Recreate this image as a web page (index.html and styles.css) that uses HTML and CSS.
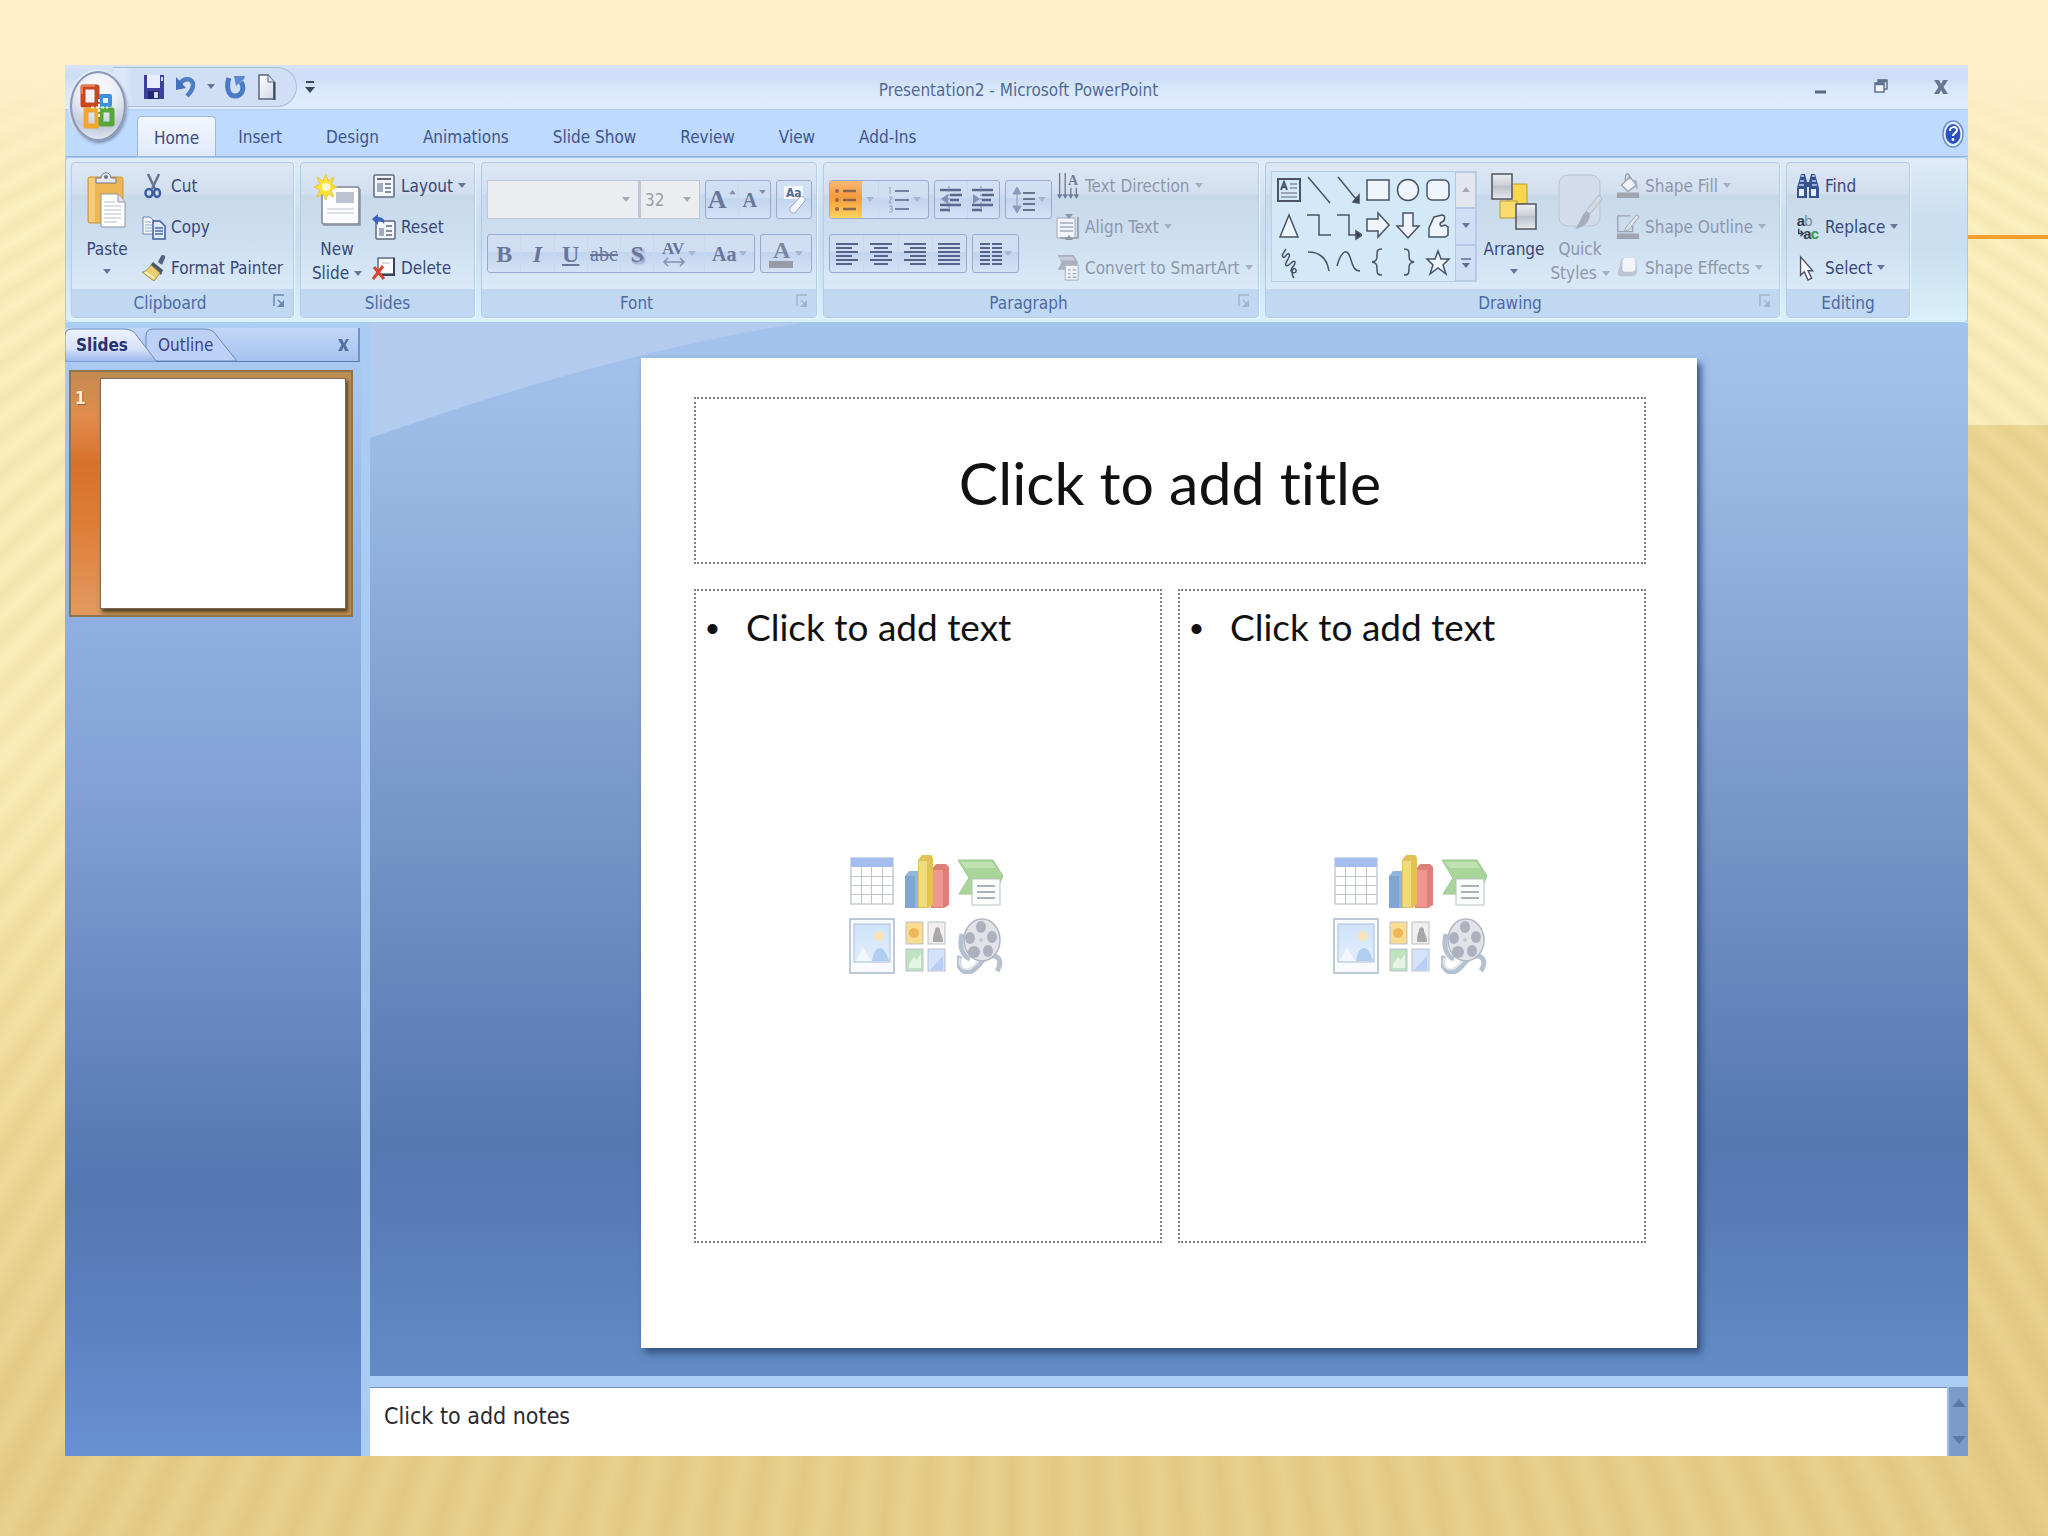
FILE: index.html
```html
<!DOCTYPE html>
<html lang="en">
<head>
<meta charset="utf-8">
<title>Presentation2 - Microsoft PowerPoint</title>
<link rel="stylesheet" href="styles.css">
</head>
<body>
<svg class="defs" aria-hidden="true">
  <defs>
    <linearGradient id="paper" x1="0" y1="0" x2="1" y2="1"><stop offset="0" stop-color="#fff"/><stop offset="1" stop-color="#cfd8e6"/></linearGradient>
    <linearGradient id="steel" x1="0" y1="0" x2="0" y2="1"><stop offset="0" stop-color="#eceef2"/><stop offset=".45" stop-color="#cdd1d8"/><stop offset=".5" stop-color="#bcc1ca"/><stop offset="1" stop-color="#e6eaee"/></linearGradient>
    <linearGradient id="sky" x1="0" y1="0" x2="0" y2="1"><stop offset="0" stop-color="#cfe3fa"/><stop offset="1" stop-color="#e3edfb"/></linearGradient>
    <linearGradient id="swoosh" x1="0" y1="0" x2="0" y2="1"><stop offset="0" stop-color="#b4cbed"/><stop offset="1" stop-color="#b2cbee"/></linearGradient>
    <symbol id="caret" viewBox="0 0 8 6"><path d="M0 0h8L4 5z" fill="currentColor"/></symbol>
    <symbol id="launcher" viewBox="0 0 12 14"><path d="M1 12V1h10" fill="none" stroke="currentColor" stroke-width="1.5"/><path d="M5 6l4 4" stroke="currentColor" stroke-width="1.5"/><path d="M11 6v7H4z" fill="currentColor"/></symbol>
    <symbol id="ph-table" viewBox="0 0 46 56"><rect x="2" y="4" width="42" height="46" fill="#fff" stroke="#a9b2c0"/><rect x="2" y="4" width="42" height="9" fill="#a3bdee"/><path d="M12.500 13v37M22.500 13v37M33.500 13v37M2 22.500h42M2 31.500h42M2 40.500h42" stroke="#c0c6c8"/></symbol>
    <symbol id="ph-chart" viewBox="0 0 46 56"><path d="M2 22l4-5h9v37H2z" fill="#94b5de"/><path d="M2 22h10v32H2z" fill="#82a6d4"/><path d="M28 16l5-6h10l3 3v38l-5 3H28z" fill="#dd8077"/><path d="M29 16h11v37H29z" fill="#f0978f"/><path d="M15 6l4-5h9l2 3v46l-4 4H15z" fill="#e0c255"/><path d="M16 7h8v46h-8z" fill="#f1dc7c"/></symbol>
    <symbol id="ph-smart" viewBox="0 0 46 56"><path d="M1 6h35l10 16-8 18H2l10-16z" fill="#a9d49a" stroke="#9bc58c"/><path d="M3 8h32l4 6H9z" fill="#bfe2b0"/><rect x="15" y="25" width="28" height="26" fill="#fbfdfb" stroke="#b9c4bd"/><path d="M20 32h18M20 38h18M20 44h18" stroke="#a7b3b8" stroke-width="2"/></symbol>
    <symbol id="ph-photo" viewBox="0 0 46 56"><rect x="1" y="1" width="44" height="54" fill="#f8fafd" stroke="#a8b9cc" stroke-width="1.500"/><rect x="5" y="6" width="36" height="38" fill="url(#sky)" stroke="#a9bede"/><circle cx="30" cy="18" r="5" fill="#fbe3b8"/><path d="M23 43c1-8 4-13 8-13s7 6 9 13z" fill="#b1cef0"/><path d="M7 43l7-14 8 14z" fill="#f2f7fd"/></symbol>
    <symbol id="ph-clips" viewBox="0 0 46 56"><g stroke="#b9c0cc"><rect x="3" y="4" width="17" height="22" fill="#f8dc92"/><rect x="25" y="4" width="17" height="22" fill="#f0efee"/><rect x="3" y="31" width="17" height="22" fill="#bfe3c0"/><rect x="25" y="31" width="17" height="22" fill="#d5e3fa"/></g><circle cx="11" cy="15" r="5" fill="#edb75a"/><path d="M30 24c0-7 1-9 2-11-1-5 6-5 5 0 1 3 3 6 3 11z" fill="#aaa7ab"/><path d="M6 46l5-7 3 3 4-6v14H6z" fill="#e6f5e3"/><path d="M27 52l13-14v14z" fill="#b7cef6"/></symbol>
    <symbol id="ph-film" viewBox="0 0 46 56"><path d="M3 38c-4 8 1 17 9 16 9-1 12-14 20-16 10-2 14 6 8 15M5 16c-3 12 0 22 8 25" fill="none" stroke="#b4c1d0" stroke-width="5"/><path d="M3 40c-2 7 2 12 8 11 8-2 12-13 20-15" fill="none" stroke="#e1e7ef" stroke-width="2"/><ellipse cx="25" cy="22" rx="18" ry="21" fill="#e2e3e9" stroke="#b3b6c1" stroke-width="1.500"/><g fill="#adb1be"><ellipse cx="24" cy="9" rx="5" ry="6"/><ellipse cx="13" cy="20" rx="5" ry="6"/><ellipse cx="35" cy="19" rx="5" ry="6"/><ellipse cx="17" cy="34" rx="6" ry="6"/><ellipse cx="31" cy="33" rx="5" ry="6"/></g><circle cx="24" cy="22" r="2" fill="#c5c7d0"/></symbol>
  </defs>
</svg>

<div class="rule"></div>

<div class="window">
  <header class="titlebar">
    <div class="qat">
      <button class="plain" aria-label="Save"><svg width="22" height="26" viewBox="0 0 22 26"><path d="M1 1h20v24H1z" fill="#3d3f9c"/><path d="M4 1h13v13H4z" fill="#e9eefc"/><path d="M18 3h2v4h-2z" fill="#d7dcf3"/><path d="M5 17h11v8H5z" fill="#25276b"/><path d="M11 18h4v6h-4z" fill="#d6daee"/></svg></button>
      <button class="plain" aria-label="Undo"><svg width="22" height="26" viewBox="0 0 22 26"><path d="M5 10c3-6 13-7 13 1 0 5-3 8-6 11" fill="none" stroke="#4f7cc4" stroke-width="4.500"/><path d="M1 3v13l10-2z" fill="#4470bb"/></svg></button>
      <button class="plain" aria-label="Undo options"><svg class="caret"><use href="#caret"/></svg></button>
      <button class="plain" aria-label="Redo"><svg width="22" height="26" viewBox="0 0 22 26"><path d="M4 4c-3 9-1 18 6 18s10-8 6-14" fill="none" stroke="#4b7ac6" stroke-width="5"/><path d="M9 2h11l-1 3-8 7z" fill="#5c89d2"/></svg></button>
      <button class="plain" aria-label="New"><svg width="20" height="28" viewBox="0 0 20 28"><path d="M2 2h9l6 7v17H2z" fill="url(#paper)" stroke="#59647e" stroke-width="1.500"/><path d="M11 2v7h6" fill="#dfe5f2" stroke="#59647e"/><path d="M17.500 9v18" stroke="#39445f" stroke-width="2"/></svg></button>
    </div>
    <button class="plain more" aria-label="Customize toolbar"><svg width="10" height="14" viewBox="0 0 10 14"><path d="M1 2h8" stroke="#3d4657" stroke-width="2"/><path d="M0 7h10l-5 6z" fill="#3d4657"/></svg></button>
    <div class="caption">Presentation2 - Microsoft PowerPoint</div>
    <div class="controls">
      <button class="plain" aria-label="Minimize"><svg width="14" height="18" viewBox="0 0 14 18"><path d="M1 14h11" stroke="#5b6880" stroke-width="3"/></svg></button>
      <button class="plain" aria-label="Restore"><svg width="14" height="18" viewBox="0 0 14 18"><path d="M4 5V2h9v9h-3" fill="none" stroke="#61718c" stroke-width="1.500"/><rect x="1" y="5" width="9" height="9" fill="#f3f7fd" stroke="#61718c" stroke-width="1.500"/><path d="M1 6h9M4 3h9" stroke="#61718c" stroke-width="2.500"/></svg></button>
      <button class="plain" aria-label="Close"><svg width="14" height="18" viewBox="0 0 14 18"><path d="M0 2h5l2 4 2-4h5L9.500 9l4.500 7H9l-2-4-2 4H0l4.500-7z" fill="#68768f"/></svg></button>
    </div>
  </header>

  <button class="office" aria-label="Office Button">
    <svg width="38" height="48" viewBox="0 0 38 48">
      <g fill="none" stroke-width="5" stroke-linejoin="round">
        <rect x="4" y="5" width="14" height="18" stroke="#c9471c"/>
        <rect x="22" y="14" width="9" height="9" stroke="#3f8fdf" stroke-width="4"/>
        <rect x="7" y="28" width="11" height="16" stroke="#f2a62c"/>
        <rect x="22" y="28" width="11" height="14" stroke="#58a63c"/>
      </g>
      <path d="M3 12V4h13" fill="none" stroke="#f08c5c" stroke-width="1.500"/>
      <path d="M12 25.500h17M20 17v19" stroke="#f6f1e4" stroke-width="2" stroke-dasharray="3 2"/>
    </svg>
  </button>

  <nav class="tabs">
    <a class="tab active" href="#home">Home</a>
    <a class="tab" href="#insert">Insert</a>
    <a class="tab" href="#design">Design</a>
    <a class="tab" href="#animations">Animations</a>
    <a class="tab" href="#slideshow">Slide Show</a>
    <a class="tab" href="#review">Review</a>
    <a class="tab" href="#view">View</a>
    <a class="tab" href="#addins">Add-Ins</a>
    <button class="plain help" aria-label="Help"><svg width="22" height="28" viewBox="0 0 22 28"><ellipse cx="11" cy="14" rx="10" ry="13" fill="#e8f0fd" stroke="#6d8fd0" stroke-width="1.500"/><ellipse cx="11" cy="14" rx="7.500" ry="10" fill="#2c53c4"/><path d="M8 11c0-5 7-5 7-1 0 3-4 3-4 6" fill="none" stroke="#fff" stroke-width="2"/><circle cx="11" cy="19.500" r="1.400" fill="#fff"/></svg></button>
  </nav>

  <section class="ribbon" id="home">
    <div class="group clipboard">
      <div class="tools">
        <button class="big"><svg width="40" height="56" viewBox="0 0 40 56"><rect x="1" y="5" width="35" height="46" rx="2" fill="#eeb653" stroke="#c99843"/><path d="M2 6h6v44H2z" fill="#f6cb7b"/><path d="M9 11V6h5c0-7 10-7 10 0h5v5z" fill="#e6e9ef" stroke="#717886"/><circle cx="19" cy="5" r="2" fill="#6b7280"/><path d="M14 22h17l7 8v25H14z" fill="#fff" stroke="#8b93a4"/><path d="M31 22v8h7" fill="#dde3ee" stroke="#8b93a4"/><path d="M17 30h11M17 34h17M17 38h17M17 42h17M17 46h17M17 50h13" stroke="#b7bec9"/></svg><span>Paste</span><svg class="caret"><use href="#caret"/></svg></button>
        <div class="rows">
          <button class="row"><svg class="icon" viewBox="0 0 24 26"><path d="M6 1l7 15M17 1l-7 15" stroke="#66748d" stroke-width="2.500"/><g fill="none" stroke="#3d5ca4" stroke-width="2.500"><ellipse cx="7" cy="20" rx="3.500" ry="4"/><ellipse cx="15" cy="20" rx="3" ry="4"/></g></svg>Cut</button>
          <button class="row"><svg class="icon" viewBox="0 0 24 26"><path d="M1 3h7l4 4v13H1z" fill="#f5f8fd" stroke="#7286b3"/><path d="M3 8h6M3 11h7M3 14h7M3 17h7" stroke="#93a6cf"/><path d="M11 7h7l5 5v13H11z" fill="#dfe9fb" stroke="#3f5c9e" stroke-width="1.500"/><path d="M13 14h8M13 17h8M13 20h8" stroke="#4b6cb4" stroke-width="1.500"/></svg>Copy</button>
          <button class="row"><svg class="icon" viewBox="0 0 24 26"><path d="M16 7l3-6c1-2 5-1 4 2l-3 7z" fill="#56627a"/><path d="M11 7l10 8-2 5-11-9z" fill="#4c566c"/><path d="M9 10l9 8-6 8L0 17c4 0 7-4 9-7z" fill="#e9cf71" stroke="#a58d45"/><path d="M3 17l9 6" stroke="#fff3bb" stroke-width="2"/></svg>Format Painter</button>
        </div>
      </div>
      <div class="label"><span>Clipboard</span><svg class="launcher"><use href="#launcher"/></svg></div>
    </div>

    <div class="group slides">
      <div class="tools">
        <button class="big two"><svg width="48" height="56" viewBox="0 0 48 56"><rect x="9" y="15" width="37" height="37" rx="2" fill="#fdfdff" stroke="#7b8598" stroke-width="1.500"/><path d="M23 20h18v11H23z" fill="#bcc4d1"/><path d="M14 37h27M14 41h27" stroke="#bbc2ce"/><path d="M10 53h37V17" fill="none" stroke="#8c93a3" stroke-width="1.500"/><path d="M13 2l2 7 6-4-3 7 6 3-6 3 3 7-6-3-2 6-3-6-6 3 3-7-6-3 6-3-3-7 6 4z" fill="#fbe338" stroke="#e9c53c"/><circle cx="13" cy="15" r="4" fill="#fffbd0"/></svg><span>New<br>Slide <svg class="caret"><use href="#caret"/></svg></span></button>
        <div class="rows">
          <button class="row"><svg class="icon" viewBox="0 0 24 26"><rect x="2" y="2" width="20" height="22" rx="1" fill="#f4f6fb" stroke="#5f6a82" stroke-width="1.500"/><path d="M5 6h14" stroke="#5f6a82" stroke-width="2"/><path d="M5 10h6v9H5z" fill="#a2acbf"/><path d="M13 11h6M13 15h6M13 19h6" stroke="#5f6a82" stroke-width="1.500"/></svg>Layout <svg class="caret"><use href="#caret"/></svg></button>
          <button class="row"><svg class="icon" viewBox="0 0 24 26"><rect x="4" y="7" width="19" height="18" rx="1" fill="#f4f6fb" stroke="#5f6a82" stroke-width="1.500"/><path d="M7 14h5v8H7z" fill="#a2acbf"/><path d="M14 12h6M14 17h6M14 21h6" stroke="#5f6a82" stroke-width="1.500"/><path d="M0 5l6-5v3c5 0 7 3 6 7-2-3-3-3-6-3v4z" fill="#3c64c0"/></svg>Reset</button>
          <button class="row"><svg class="icon" viewBox="0 0 24 26"><rect x="6" y="3" width="16" height="16" fill="#fbfcfe" stroke="#5f6a82" stroke-width="1.500"/><path d="M22 3v17H9" fill="none" stroke="#39445c" stroke-width="2"/><path d="M10 8h8" stroke="#b4bccb"/><path d="M2 12l10 12M11 11L1 24" stroke="#dd4430" stroke-width="3"/></svg>Delete</button>
        </div>
      </div>
      <div class="label"><span>Slides</span></div>
    </div>

    <div class="group font">
      <div class="tools">
        <div class="stack">
        <div class="line">
          <div class="combos">
            <label class="combo wide"><select aria-label="Font" disabled><option></option></select><svg class="caret"><use href="#caret"/></svg></label>
            <label class="combo"><select aria-label="Font size" disabled><option>32</option></select><svg class="caret"><use href="#caret"/></svg></label>
          </div>
          <div class="box w66">
            <button class="tb serif big-a" aria-label="Grow font">A<svg class="mini" viewBox="0 0 8 6"><path d="M0 5h8L4 0z" fill="currentColor"/></svg></button>
            <button class="tb serif heavy" aria-label="Shrink font">A<svg class="mini"><use href="#caret"/></svg></button>
          </div>
          <div class="box w36"><button class="tb" aria-label="Clear formatting"><svg width="28" height="32" viewBox="0 0 28 32"><rect x="4" y="2" width="19" height="13" fill="#f5f8fe"/><text x="6" y="13" class="tiny">Aa</text><path d="M10 24l10-11c3-2 7 2 4 5L15 29c-3 1-6-2-5-5z" fill="#f3f5fa" stroke="#9aa7c4"/></svg></button></div>
        </div>
        <div class="line">
          <div class="box w268">
            <button class="tb serif bold">B</button><button class="tb serif italic">I</button><button class="tb serif under">U</button><button class="tb serif strike">abc</button><button class="tb serif shadow">S</button>
            <button class="tb wider" aria-label="Character spacing"><svg width="24" height="28" viewBox="0 0 24 28"><text x="0" y="14" class="av">AV</text><path d="M2 22h20M6 18l-4 4 4 4M18 18l4 4-4 4" fill="none" stroke="#8390b3" stroke-width="1.500"/></svg><svg class="caret faint"><use href="#caret"/></svg></button>
            <button class="tb wider serif heavy" aria-label="Change case">Aa<svg class="caret faint"><use href="#caret"/></svg></button>
          </div>
          <div class="box w52"><button class="tb" aria-label="Font color"><svg width="24" height="32" viewBox="0 0 24 32"><text x="4" y="20" class="fc">A</text><path d="M0 23h24v7H0z" fill="#979ba5"/></svg><svg class="caret faint"><use href="#caret"/></svg></button></div>
        </div>
        </div>
      </div>
      <div class="label"><span>Font</span><svg class="launcher faint"><use href="#launcher"/></svg></div>
    </div>

    <div class="group paragraph">
      <div class="tools">
        <div class="stack">
          <div class="line">
            <div class="box w100">
              <button class="tb hot" aria-label="Bullets"><svg width="24" height="28" viewBox="0 0 24 28"><path d="M9 5h13M9 14h13M9 23h13" stroke="#8a6550" stroke-width="2.500"/><g fill="#9b6a48"><circle cx="3" cy="5" r="2"/><circle cx="3" cy="14" r="2"/><circle cx="3" cy="23" r="2"/></g></svg></button>
              <button class="tb slim" aria-label="Bullet options"><svg class="caret faint"><use href="#caret"/></svg></button>
              <button class="tb" aria-label="Numbering"><svg width="24" height="28" viewBox="0 0 24 28"><path d="M8 5h14M8 14h14M8 23h14" stroke="#76809f" stroke-width="2"/><path d="M3 1v7M2 11h3l-3 6h3M2 20h3v6H2M3 23h2" fill="none" stroke="#98a1bb"/></svg><svg class="caret faint"><use href="#caret"/></svg></button>
            </div>
            <div class="box w66">
              <button class="tb" aria-label="Decrease indent"><svg width="24" height="28" viewBox="0 0 24 28"><path d="M1 4h21M11 9h12M11 14h9M1 19h21M1 24h10" stroke="#5b678c" stroke-width="2.500"/><path d="M9 8v10l-7-5z" fill="#8190b8"/><path d="M10 0v28" stroke="#7b87a6" stroke-dasharray="2 2"/></svg></button>
              <button class="tb" aria-label="Increase indent"><svg width="24" height="28" viewBox="0 0 24 28"><path d="M1 4h21M11 9h12M11 14h9M1 19h21M1 24h10" stroke="#5b678c" stroke-width="2.500"/><path d="M2 8v10l7-5z" fill="#8190b8"/><path d="M10 0v28" stroke="#7b87a6" stroke-dasharray="2 2"/></svg></button>
            </div>
            <div class="box w47"><button class="tb" aria-label="Line spacing"><svg width="24" height="28" viewBox="0 0 24 28"><path d="M11 7h12M11 13h12M11 18h12M11 24h12" stroke="#69748f" stroke-width="2"/><path d="M5 1l4 7H1zM5 27l4-7H1zM5 8v12" fill="#8c99b8" stroke="#8c99b8"/></svg><svg class="caret faint"><use href="#caret"/></svg></button></div>
          </div>
          <div class="line">
            <div class="box w138">
              <button class="tb" aria-label="Align left"><svg class="al" viewBox="0 0 22 24"><path d="M0 2h22M0 6h16M0 10h22M0 14h16M0 18h22M0 22h16"/></svg></button>
              <button class="tb" aria-label="Center"><svg class="al" viewBox="0 0 22 24"><path d="M0 2h22M4 6h14M0 10h22M4 14h14M0 18h22M4 22h14"/></svg></button>
              <button class="tb" aria-label="Align right"><svg class="al" viewBox="0 0 22 24"><path d="M0 2h22M6 6h16M0 10h22M6 14h16M0 18h22M6 22h16"/></svg></button>
              <button class="tb" aria-label="Justify"><svg class="al" viewBox="0 0 22 24"><path d="M0 2h22M0 6h22M0 10h22M0 14h22M0 18h22M0 22h22"/></svg></button>
            </div>
            <div class="box w47"><button class="tb" aria-label="Columns"><svg class="al" viewBox="0 0 22 24"><path d="M0 2h10M0 6h10M0 10h10M0 14h10M0 18h10M0 22h10M12 2h10M12 6h10M12 10h10M12 14h10M12 18h10M12 22h10"/></svg><svg class="caret faint"><use href="#caret"/></svg></button></div>
          </div>
        </div>
        <div class="rows">
          <button class="row" disabled><svg class="icon" viewBox="0 0 24 28"><path d="M3 0v26M9 0v26M15 16v10M21 16v10" stroke="#727c97" stroke-width="1.500"/><path d="M0 23h6l-3 5zM6 23h6l-3 5zM12 23h6l-3 5zM18 23h6l-3 5z" fill="#727c97"/><text x="12" y="13" class="td">A</text></svg>Text Direction <svg class="caret"><use href="#caret"/></svg></button>
          <button class="row" disabled><svg class="icon" viewBox="0 0 24 26"><path d="M1 4h18v20H1z" fill="#f1f4f9" stroke="#a4abba"/><path d="M4 9h13M4 13h13M4 17h13" stroke="#a4abba" stroke-width="1.500"/><path d="M22 3v21H4" fill="none" stroke="#9ca3b3" stroke-width="2"/><path d="M9 0h8l-4 5zM9 26h8l-4-5z" fill="#8d94a6"/></svg>Align Text <svg class="caret"><use href="#caret"/></svg></button>
          <button class="row" disabled><svg class="icon" viewBox="0 0 24 28"><path d="M1 0h17l5 8-4 8H1l4-8z" fill="#a9b0be"/><path d="M2 2h15l2 4H5z" fill="#c6ccd7"/><rect x="9" y="11" width="14" height="16" fill="#eef1f6" stroke="#a7aebc"/><path d="M12 16h3M17 16h4M12 20h3M17 20h4M12 24h3M17 24h4" stroke="#a7aebc" stroke-width="1.500"/></svg>Convert to SmartArt <svg class="caret"><use href="#caret"/></svg></button>
        </div>
      </div>
      <div class="label"><span>Paragraph</span><svg class="launcher faint"><use href="#launcher"/></svg></div>
    </div>

    <div class="group drawing">
      <div class="tools">
        <div class="gallery">
          <div class="shapes">
            <button class="plain" aria-label="Text box"><svg viewBox="0 0 26 32"><rect x="2" y="5" width="22" height="22" stroke-width="2"/><path d="M5 16l3-8 3 8M6 13h4" stroke-width="2"/><path d="M14 10h7M14 14h7M5 19h16M5 23h16" stroke="#8690a5"/></svg></button>
            <button class="plain" aria-label="Line"><svg viewBox="0 0 26 32"><path d="M2 3l22 26"/></svg></button>
            <button class="plain" aria-label="Arrow"><svg viewBox="0 0 26 32"><path d="M2 3l18 22"/><path d="M23 29v-8l-6 7z" fill="#3b4358"/></svg></button>
            <button class="plain" aria-label="Rectangle"><svg viewBox="0 0 26 32"><rect x="2" y="6" width="22" height="20" fill="#eef6fc"/></svg></button>
            <button class="plain" aria-label="Oval"><svg viewBox="0 0 26 32"><circle cx="13" cy="16" r="10.500" fill="#eef6fc"/></svg></button>
            <button class="plain" aria-label="Rounded rectangle"><svg viewBox="0 0 26 32"><rect x="2" y="6" width="22" height="20" rx="5" fill="#eef6fc"/></svg></button>
            <button class="plain" aria-label="Triangle"><svg viewBox="0 0 26 32"><path d="M13 5l9 22H4z" fill="#eef6fc"/></svg></button>
            <button class="plain" aria-label="Elbow connector"><svg viewBox="0 0 26 32"><path d="M1 5h12v20h12"/></svg></button>
            <button class="plain" aria-label="Elbow arrow connector"><svg viewBox="0 0 26 32"><path d="M1 5h12v20h8"/><path d="M20 21v8l6-4z" fill="#3b4358"/></svg></button>
            <button class="plain" aria-label="Right arrow"><svg viewBox="0 0 26 32"><path d="M2 9h11V3l11 12-11 12v-6H2z" fill="#eef6fc"/></svg></button>
            <button class="plain" aria-label="Down arrow"><svg viewBox="0 0 26 32"><path d="M8 3h10v13h6L13 28 2 16h6z" fill="#eef6fc"/></svg></button>
            <button class="plain" aria-label="Freeform"><svg viewBox="0 0 26 32"><path d="M9 7l8-2c4 0 3 6 0 7s-2 5 0 4l3-1 3 2v8l-3 2H4v-9z" fill="#eef6fc"/></svg></button>
            <button class="plain" aria-label="Scribble"><svg viewBox="0 0 26 32"><path d="M10 2c-2 3-5 6-3 8s4-5 6-3-2 6-3 9 1 4 4 1 5-4 5-1-5 5-4 8 6 2 5-1-4-1-4 2 0 4 2 6"/></svg></button>
            <button class="plain" aria-label="Arc"><svg viewBox="0 0 26 32"><path d="M2 5c12 0 19 6 21 19"/></svg></button>
            <button class="plain" aria-label="Curve"><svg viewBox="0 0 26 32"><path d="M1 19C6 2 11 2 14 10c3 9 4 14 10 14"/></svg></button>
            <button class="plain" aria-label="Left brace"><svg viewBox="0 0 26 32"><path d="M17 2c-5 0-5 2-5 6s0 6-5 7c5 1 5 3 5 7s0 6 5 6"/></svg></button>
            <button class="plain" aria-label="Right brace"><svg viewBox="0 0 26 32"><path d="M9 2c5 0 5 2 5 6s0 6 5 7c-5 1-5 3-5 7s0 6-5 6"/></svg></button>
            <button class="plain" aria-label="Star"><svg viewBox="0 0 26 32"><path d="M13 4l3 8h8l-6 6 3 9-8-6-8 6 3-9-6-6h8z" fill="#eef6fc"/></svg></button>
          </div>
          <div class="scroll">
            <button class="plain up" aria-label="Scroll up"><svg width="8" height="6" viewBox="0 0 8 6"><path d="M0 5h8L4 0z" fill="#a6a9b3"/></svg></button>
            <button class="plain" aria-label="Scroll down"><svg class="caret"><use href="#caret"/></svg></button>
            <button class="plain" aria-label="More shapes"><svg width="10" height="12" viewBox="0 0 10 12"><path d="M0 2h10" stroke="#5a6c94" stroke-width="1.500"/><path d="M1 6h8l-4 5z" fill="#5a6c94"/></svg></button>
          </div>
        </div>
        <button class="big arrange"><svg width="46" height="58" viewBox="0 0 46 58"><rect x="17" y="12" width="19" height="20" fill="#f9d650" stroke="#b79b3f"/><rect x="9" y="29" width="17" height="17" fill="#f9dc6b" stroke="#b79b3f"/><g stroke="#50545f" stroke-width="1.500"><rect x="1" y="2" width="20" height="25" fill="url(#steel)"/><rect x="25" y="32" width="20" height="25" fill="url(#steel)"/></g></svg><span>Arrange</span><svg class="caret"><use href="#caret"/></svg></button>
        <button class="big two quick" disabled><svg width="46" height="58" viewBox="0 0 46 58"><rect x="2" y="3" width="41" height="51" rx="9" fill="#d3dcea" stroke="#bac3d4"/><path d="M45 27L33 42l-4-3 13-16z" fill="#d5d9e2" stroke="#b4b9c6"/><path d="M33 42c0 8-7 14-15 15 5-6 6-13 11-18z" fill="#a7adbd"/></svg><span>Quick<br>Styles <svg class="caret"><use href="#caret"/></svg></span></button>
        <div class="rows">
          <button class="row" disabled><svg class="icon" viewBox="0 0 24 28"><path d="M0 21h24v6H0z" fill="#a0a4b0"/><path d="M5 13L14 4l7 9-9 7z" fill="#f1f3f8" stroke="#9da3b1" stroke-width="1.500"/><path d="M9 9c0-11 5-10 5-2" fill="none" stroke="#9da3b1" stroke-width="1.500"/><path d="M18 7c4 0 5 5 4 11-2-2-2-5-3-6z" fill="#a9afbd"/></svg>Shape Fill <svg class="caret"><use href="#caret"/></svg></button>
          <button class="row" disabled><svg class="icon" viewBox="0 0 24 28"><path d="M0 21h24v6H0z" fill="#a0a4b0"/><path d="M15 2H1v17h16v-7" fill="none" stroke="#9da3b1" stroke-width="1.500"/><path d="M21 1l3 2L13 17l-5 2 2-5z" fill="#dfe3eb" stroke="#9da3b1"/></svg>Shape Outline <svg class="caret"><use href="#caret"/></svg></button>
          <button class="row" disabled><svg class="icon" viewBox="0 0 24 28"><path d="M4 8c0-3 2-5 6-5h7c3 0 4 2 4 5l1 9c0 4-3 6-7 6H5c-3 0-4-2-4-4z" fill="#bcc4d3"/><path d="M6 7c0-3 2-4 4-4h7c3 0 3 2 3 4v7c0 3-2 4-4 4H9c-3 0-3-1-3-4z" fill="#f1f4f9"/></svg>Shape Effects <svg class="caret"><use href="#caret"/></svg></button>
        </div>
      </div>
      <div class="label"><span>Drawing</span><svg class="launcher faint"><use href="#launcher"/></svg></div>
    </div>

    <div class="group editing">
      <div class="tools">
        <div class="rows">
          <button class="row"><svg class="icon" viewBox="0 0 24 26"><path d="M5 1h4l2 8v16H1V15zM15 1h4l4 14v10H13V9z" fill="#34548f"/><path d="M3 16h5v7H3zM15 16h5v7h-5z" fill="#e9f0fb"/><path d="M5 3h3M16 3h3M4 8h4M16 8h4M3 12h5M16 12h5" stroke="#bed0ec" stroke-width="1.500"/><path d="M10 9h4v5h-4z" fill="#34548f"/></svg>Find</button>
          <button class="row"><svg class="icon" viewBox="0 0 24 28"><text x="0" y="13" class="rp">a</text><text x="8" y="13" class="rp light">b</text><text x="7" y="27" class="rp">a</text><text x="15" y="27" class="rp green">c</text><path d="M2 16v5h4M4 18l3 3-3 3" fill="none" stroke="#343c50" stroke-width="1.500"/></svg>Replace <svg class="caret"><use href="#caret"/></svg></button>
          <button class="row"><svg class="icon" viewBox="0 0 24 28"><path d="M4 2v20l4-4 4 9 4-2-4-8h5z" fill="#fbfcfe" stroke="#4c5368" stroke-width="1.500"/></svg>Select <svg class="caret"><use href="#caret"/></svg></button>
        </div>
      </div>
      <div class="label"><span>Editing</span></div>
    </div>
  </section>

  <div class="body">
    <aside class="pane">
      <div class="panetabs">
        <svg class="panebg" viewBox="0 0 294 34" preserveAspectRatio="none"><defs><linearGradient id="tabg" x1="0" y1="0" x2="0" y2="1"><stop offset="0" stop-color="#eef2fc"/><stop offset=".6" stop-color="#d7e2f9"/><stop offset="1" stop-color="#98b6ea"/></linearGradient></defs><path d="M81 33V8q0-7 7-7h52q8 0 12 7l20 25z" fill="#bcd1f5" stroke="#6b8abc"/><path d="M0 34V8q0-7 7-7h52q9 0 13 7l20 26z" fill="url(#tabg)" stroke="#6b8abc"/><path d="M92 33.500h202" stroke="#5678ae"/></svg>
        <button class="ptab on">Slides</button>
        <button class="ptab">Outline</button>
        <button class="ptab x" aria-label="Close pane"><svg width="11" height="14" viewBox="0 0 11 14"><path d="M0 1h4l2 4 2-4h3L7.500 7l3.500 6H7L5.500 9 4 13H0l3.500-6z" fill="#56719f"/></svg></button>
      </div>
      <div class="thumb"><span>1</span><div class="page"></div></div>
    </aside>
    <main class="work">
      <div class="stage">
        <svg class="swoosh" viewBox="0 0 480 116" aria-hidden="true"><path d="M0 0h430C300 20 150 62 0 115z" fill="url(#swoosh)"/></svg>
        <article class="slide">
          <h1 class="ph title">Click to add title</h1>
          <div class="cols">
            <div class="ph content">
              <ul><li>Click to add text</li></ul>
              <div class="inserts">
                <button class="plain" aria-label="Insert table"><svg><use href="#ph-table"/></svg></button><button class="plain" aria-label="Insert chart"><svg><use href="#ph-chart"/></svg></button><button class="plain" aria-label="Insert SmartArt"><svg><use href="#ph-smart"/></svg></button><button class="plain" aria-label="Insert picture"><svg><use href="#ph-photo"/></svg></button><button class="plain" aria-label="Insert clip art"><svg><use href="#ph-clips"/></svg></button><button class="plain" aria-label="Insert media"><svg><use href="#ph-film"/></svg></button>
              </div>
            </div>
            <div class="ph content">
              <ul><li>Click to add text</li></ul>
              <div class="inserts">
                <button class="plain" aria-label="Insert table"><svg><use href="#ph-table"/></svg></button><button class="plain" aria-label="Insert chart"><svg><use href="#ph-chart"/></svg></button><button class="plain" aria-label="Insert SmartArt"><svg><use href="#ph-smart"/></svg></button><button class="plain" aria-label="Insert picture"><svg><use href="#ph-photo"/></svg></button><button class="plain" aria-label="Insert clip art"><svg><use href="#ph-clips"/></svg></button><button class="plain" aria-label="Insert media"><svg><use href="#ph-film"/></svg></button>
              </div>
            </div>
          </div>
        </article>
      </div>
      <div class="notes">
        <textarea aria-label="Notes">Click to add notes</textarea>
        <div class="nscroll"><svg width="14" height="8" viewBox="0 0 14 8"><path d="M0 8h14L7 0z" fill="#5b78ab"/></svg><svg width="14" height="8" viewBox="0 0 14 8"><path d="M0 0h14L7 8z" fill="#5b78ab"/></svg></div>
      </div>
    </main>
  </div>
</div>
</body>
</html>
```
FILE: styles.css
```css
* { box-sizing: border-box; }

:root {
  --ui: "DejaVu Sans Condensed", "Liberation Sans", sans-serif;
  --doc: "Lato", "Open Sans", sans-serif;
  --ink: #3a4778;
  --muted: #8e97ab;
}

body {
  margin: 0;
  height: 100vh;
  min-height: 900px;
  padding: 65px 80px 80px 65px;
  font: 17px/24px var(--ui);
  color: var(--ink);
  background:
    linear-gradient(#ffeec8 0, #ffeec8 70px, rgba(255, 238, 200, 0) 190px),
    repeating-conic-gradient(from 90deg at 51% -350px, rgba(200, 165, 70, .11) 0deg, rgba(255, 240, 190, .11) .65deg, rgba(200, 165, 70, .11) 1.3deg),
    linear-gradient(rgba(226, 200, 125, .65), rgba(226, 200, 125, .3)) right 425px / 80px 100% no-repeat,
    linear-gradient(#fdf1c4 0, #faebb6 50%, #ecd796 75%, #e5cd89 95%);
}

.defs { position: absolute; width: 0; height: 0; }

.rule { position: absolute; top: 235px; right: 0; width: 80px; height: 4px; background: #f3a02e; }

button { font: inherit; color: inherit; background: none; border: 0; padding: 0; margin: 0; }
svg { display: block; flex: none; }

.window { position: relative; height: 100%; display: flex; flex-direction: column; background: #bfdaff; }

.plain { display: flex; align-items: center; justify-content: center; }
.caret { display: inline-block; width: 8px; height: 6px; color: #66779e; vertical-align: middle; }
.faint { color: #a9b5cf; }

/* title bar */
.titlebar {
  height: 45px; display: flex; align-items: center;
  background: linear-gradient(#d9e4f8 0, #cbdcf6 25%, #dae9fc 60%, #dfecfd 100%);
  border-bottom: 1px solid #aecbf0;
}
.qat {
  width: 184px; height: 40px; margin-left: 48px; padding-left: 30px; display: flex; align-items: center; gap: 10px;
  border: 1px solid #a9bedd; border-left: 0; border-radius: 0 20px 20px 0;
  background: linear-gradient(90deg, #dbe7fa 12px, #d0dff4 20px);
}
.more { width: 26px; }
.caption { flex: 1; text-align: center; color: #546a96; padding: 5px 100px 0 0; }
.controls { width: 154px; display: flex; gap: 46px; }
.office {
  position: absolute; left: 5px; top: 6px; width: 56px; height: 70px; border-radius: 50%;
  display: flex; align-items: center; justify-content: center;
  background: radial-gradient(circle at 50% 25%, #fff 0, #e6eaf2 40%, #c3cbdb 70%, #f4f7fc 100%);
  border: 2px solid #8a99b4; box-shadow: 1px 2px 3px #6d84ab, 0 0 0 2px #e7eefa;
}

/* ribbon tabs */
.tabs { height: 47px; padding: 6px 4px 0 72px; display: flex; align-items: stretch; border-bottom: 1px solid #8fb4e4; background: #bfdaff; }
.tab { display: flex; align-items: center; padding: 2px 22px 0; color: #40548c; text-decoration: none; }
.tab.active { padding: 2px 16px 0; border: 1px solid #9cb9e4; border-bottom: 0; border-radius: 5px 5px 0 0; background: linear-gradient(#f3f7fd, #dfeafa); color: #3f4c7c; }
.help { margin-left: auto; align-self: center; padding-bottom: 4px; }

/* ribbon */
.ribbon { height: 166px; padding: 4px 5px; display: flex; gap: 6px; border: 1px solid #a8c9ea; border-radius: 5px; background: linear-gradient(#dfecf8 0, #cbdff1 35%, #c9def0 55%, #d9f1fb 100%); }
.group { flex: none; display: flex; flex-direction: column; border: 1px solid #b3cbe6; border-radius: 4px; background: linear-gradient(#dde7f4 0, #d2dff0 20%, #c8d9ea 21%, #cddff0 50%, #d9e9f8 80%); box-shadow: 1px 1px 0 #e9f6fd; }
.clipboard { width: 223px; }
.slides { width: 175px; }
.font { width: 336px; }
.paragraph { width: 436px; }
.drawing { width: 515px; }
.editing { width: 124px; }
.tools { flex: 1; min-height: 0; display: flex; padding: 2px 5px 0; }
.label { flex: none; height: 28px; display: flex; align-items: center; background: #c0d8f1; color: #4f69a4; }
.label span { flex: 1; text-align: center; }
.launcher { width: 12px; height: 14px; margin: 0 8px 4px 5px; color: #6f87b5; }
.launcher.faint { color: #a3b4d0; }

.rows { display: grid; grid-template-rows: repeat(3, 41px); }
.row { display: flex; align-items: center; gap: 5px; white-space: nowrap; text-align: left; }
.icon { width: 24px; height: 26px; }
.row:disabled, .big:disabled { color: var(--muted); }
.row:disabled .caret, .big:disabled .caret { color: #a5b0c4; }

.big { display: flex; flex-direction: column; align-items: center; padding-top: 7px; line-height: 24px; }
.big span { margin-top: 9px; white-space: nowrap; }
.big > .caret { margin-top: 8px; }
.clipboard .big { width: 50px; margin: 0 10px 0 5px; }
.slides .big { width: 62px; margin-right: 4px; }

/* font and paragraph boxes */
.stack { display: flex; flex-direction: column; gap: 15px; padding-top: 15px; }
.line { display: flex; gap: 5px; }
.box { height: 39px; display: flex; border: 1px solid #98abcf; border-radius: 3px; background: linear-gradient(#d3e0f3 0, #cfdef3 45%, #c2d4ee 46%, #d4e2f6 100%); }
.w36 { width: 36px; } .w47 { width: 47px; } .w52 { width: 52px; } .w66 { width: 66px; }
.w100 { width: 100px; } .w138 { width: 138px; } .w268 { width: 268px; }
.tb { flex: 1; display: flex; align-items: center; justify-content: center; gap: 2px; color: #6a7699; }
.tb + .tb { border-left: 1px solid #c9d8ee; }
.tb.wider { flex: 1 0 18px; }
.tb.slim { flex: 0 0 16px; border-left: 0; }
.tb.hot { flex: 0 0 32px; background: linear-gradient(#f9b872, #f79a3c 45%, #fbd65b); }
.serif { font-family: "Liberation Serif", serif; font-size: 20px; }
.big-a { font-size: 26px; font-weight: bold; }
.heavy { font-weight: bold; }
.bold { font-size: 24px; font-weight: bold; }
.italic { font-size: 24px; font-style: italic; font-weight: bold; }
.under { font-size: 24px; font-weight: bold; text-decoration: underline; }
.strike { text-decoration: line-through; }
.shadow { font-size: 24px; font-weight: bold; text-shadow: 2px 2px 2px #8b96b5; }
.mini { width: 7px; height: 5px; margin-bottom: 14px; color: #8390b3; }
.combos { display: flex; }
.combo { width: 60px; height: 39px; display: flex; align-items: center; padding: 0 8px 0 4px; background: #ecedf0; border: 1px solid #bcc8da; color: #a2a6b2; }
.combo.wide { width: 153px; border-right-width: 2px; }
.combo select { flex: 1; min-width: 0; appearance: none; border: 0; background: none; padding: 0; font: inherit; color: #9a9eab; opacity: 1; }
.combo .caret { color: #a5a9b5; }
.al { width: 22px; height: 24px; fill: none; stroke: #55628a; stroke-width: 2; }
.tiny { font: bold 12px var(--ui); fill: #5d6b93; }
.av { font: bold 17px "Liberation Serif", serif; fill: #6a7699; }
.fc { font: bold 24px "Liberation Serif", serif; fill: #7c87a5; }
.td { font: bold 15px "Liberation Serif", serif; fill: #727c97; }
.rp { font: bold 16px "Liberation Sans", sans-serif; fill: #343c50; }
.rp.light { font-weight: normal; fill: #7d879d; }
.rp.green { fill: #2f9a4c; }
.paragraph .rows { margin-left: 4px; }

/* drawing */
.gallery { flex: none; width: 206px; height: 111px; margin-top: 6px; display: flex; border: 1px solid #b9cde4; background: #d3e9f7; }
.shapes { flex: 1; display: grid; grid-template: repeat(3, 1fr) / repeat(6, 1fr); padding: 0 2px; }
.shapes svg { width: 26px; height: 32px; fill: none; stroke: #4a5268; stroke-width: 1.5; }
.scroll { width: 21px; display: grid; grid-template-rows: repeat(3, 1fr); }
.scroll .plain { border: 1px solid #b5c9e6; background: #cfe0f6; }
.scroll .up { background: #e4e6ee; }
.arrange { flex: none; width: 64px; margin-left: 5px; }
.quick { flex: none; width: 60px; margin: 0 6px 0 4px; }
.arrange span, .quick span { margin-top: 7px; }
.editing .rows { margin-left: 4px; }

/* body */
.body { flex: 1; min-height: 0; display: flex; background: #a5c6f0; }
.pane { width: 305px; padding: 5px 10px 0 0; border-right: 9px solid #a9ccf5; background: linear-gradient(#aecdf5 0, #8fb0e0 26%, #84a2d6 40%, #5377b0 76%, #5c81c0 88%, #6891d3 100%); }
.panetabs { position: relative; height: 34px; margin-right: -9px; display: flex; align-items: center; padding: 0 9px 0 11px; background: linear-gradient(#c3d8f8, #a5c1ee); border-right: 2px solid #6f93c8; }
.panebg { position: absolute; inset: 0; width: 294px; height: 34px; }
.ptab { position: relative; width: 82px; text-align: left; color: #3c417f; }
.ptab.on { font-weight: bold; color: #27336c; }
.ptab.x { width: auto; margin-left: auto; }
.thumb { height: 247px; margin: 8px -2px 0 4px; padding: 6px 5px 6px 0; display: flex; border: 2px solid #8d7450; background: linear-gradient(90deg, rgba(190, 138, 80, 0) 24px, #bd8c50 36px), linear-gradient(#c78a50 0, #e08c4e 18%, #d8702a 38%, #dd7c34 60%, #e39a60 100%); }
.thumb span { width: 29px; padding: 8px 0 0 4px; font-weight: bold; color: #fbeede; text-shadow: 1px 1px 1px #a35c22; }
.page { flex: 1; background: #fff; border: 1px solid #7a6a5a; box-shadow: 2px 3px 3px #5b4527; }

.work { flex: 1; min-width: 0; display: flex; flex-direction: column; }
.stage { position: relative; flex: 1; min-height: 0; padding: 35px 271px 28px; display: flex; background: linear-gradient(#a4c4ee 0, #98b8e3 15%, #87a5d5 32%, #7191c4 52%, #5478b0 78%, #5a7fb9 88%, #628bc5 100%); }
.swoosh { position: absolute; left: 0; top: 0; width: 480px; height: 116px; }
.slide { position: relative; flex: 1; display: flex; flex-direction: column; gap: 25px; padding: 39px 51px 105px 53px; background: #fff; box-shadow: 4px 5px 7px #34517f; }
.ph { margin: 0; border: 2px dotted #7f7c90; font-variant-ligatures: none; }
.title { height: 167px; display: flex; align-items: center; justify-content: center; padding-top: 4px; font: 59px/80px var(--doc); font-variant-ligatures: none; color: #111; }
.cols { flex: 1; display: grid; grid-template-columns: 1fr 1fr; gap: 16px; }
.content { display: grid; font: 37px/54px var(--doc); font-variant-ligatures: none; color: #111; }
.content ul, .inserts { grid-area: 1 / 1; }
.content ul { margin: 0; padding: 9px 0 0 50px; list-style: none; }
.content li::before { content: "•"; display: inline-block; width: 40px; margin-left: -40px; font-family: "Liberation Sans", sans-serif; }
.inserts { place-self: center; display: grid; grid-template-columns: repeat(3, 46px); gap: 8px; padding: 0 4px 4px 0; }
.inserts svg { width: 46px; height: 56px; }

.notes { height: 80px; display: flex; border-top: 11px solid #abcdf6; background: #fff; }
.notes textarea { flex: 1; resize: none; border: 0; border-top: 1px solid #7590bf; outline: 0; padding: 12px 14px 0; font: 23px/32px var(--ui); color: #2a2a30; background: #fff; }
.nscroll { width: 21px; padding: 12px 0; display: flex; flex-direction: column; justify-content: space-between; align-items: center; border-left: 2px solid #9fbdea; background: #7d9bc8; }
```
